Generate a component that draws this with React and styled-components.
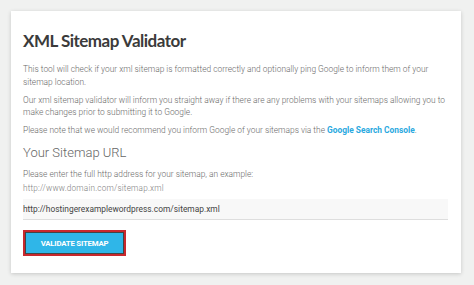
import React from "react";
import styled, { createGlobalStyle } from "styled-components";

const GlobalStyle = createGlobalStyle`
  html, body {
    margin: 0;
    padding: 0;
    background: #f0f1f0;
  }
  * {
    box-sizing: border-box;
  }
`;

function App() {
  return (
    <>
      <GlobalStyle />
      <Page>
        <Card>
          <Title>XML Sitemap Validator</Title>
          <Text>
            This tool will check if your xml sitemap is formatted correctly and
            optionally ping Google to inform them of your sitemap location.
          </Text>
          <Text>
            Our xml sitemap validator will inform you straight away if there are
            any problems with your sitemaps allowing you to make changes prior
            to submitting it to Google.
          </Text>
          <Text>
            Please note that we would recommend you inform Google of your
            sitemaps via the <Link href="#">Google Search Console</Link>.
          </Text>
          <SubTitle>Your Sitemap URL</SubTitle>
          <Label>Please enter the full http address for your sitemap, an example:</Label>
          <Example>http://www.domain.com/sitemap.xml</Example>
          <Input defaultValue="http://hostingerexamplewordpress.com/sitemap.xml" />
          <Button>Validate Sitemap</Button>
        </Card>
      </Page>
    </>
  );
}

const Page = styled.div`
  width: 474px;
  height: 285px;
  padding: 11px 13px 12px 11px;
`;

const Card = styled.div`
  height: 262px;
  background: #fff;
  box-shadow: 0 1px 4px rgba(0, 0, 0, 0.18);
  padding: 21px 13px 0 12px;
  font-family: Roboto, "Liberation Sans", sans-serif;
`;

const Title = styled.h1`
  margin: 0 0 13px;
  font-family: Lato, "Open Sans", sans-serif;
  font-weight: 700;
  font-size: 17px;
  line-height: 18px;
  letter-spacing: -0.5px;
  color: #3b3b3b;
`;

const Text = styled.p`
  margin: 0 0 5.5px;
  font-weight: 300;
  font-size: 8.4px;
  line-height: 12.5px;
  color: #6a6a6a;
`;

const Link = styled.a`
  color: #2aa9e0;
  font-weight: 700;
  text-decoration: none;
`;

const SubTitle = styled.h2`
  margin: 8px 0 7px;
  font-weight: 300;
  font-size: 13px;
  line-height: 16px;
  color: #666;
`;

const Label = styled(Text)`
  margin: 0 0 3px;
`;

const Example = styled.div`
  font-weight: 300;
  font-size: 8.2px;
  line-height: 10px;
  letter-spacing: 0.2px;
  color: #808080;
  margin-bottom: 6px;
`;

const Input = styled.input`
  display: block;
  width: 100%;
  height: 21px;
  border: none;
  border-bottom: 1px solid #dedede;
  background: #f8f8f8;
  padding: 0;
  font-family: Roboto, "Liberation Sans", sans-serif;
  font-size: 8.4px;
  color: #444;
  outline: none;
`;

const Button = styled.button`
  display: block;
  margin-top: 10px;
  width: 103px;
  height: 26px;
  background: #2fb6e8;
  border: 2px solid #c8282d;
  box-shadow: inset 0 0 0 1px #444;
  color: #fff;
  font-family: Roboto, "Liberation Sans", sans-serif;
  font-weight: 700;
  font-size: 7.8px;
  text-transform: uppercase;
  letter-spacing: -0.2px;
  cursor: pointer;
`;

export default App;
